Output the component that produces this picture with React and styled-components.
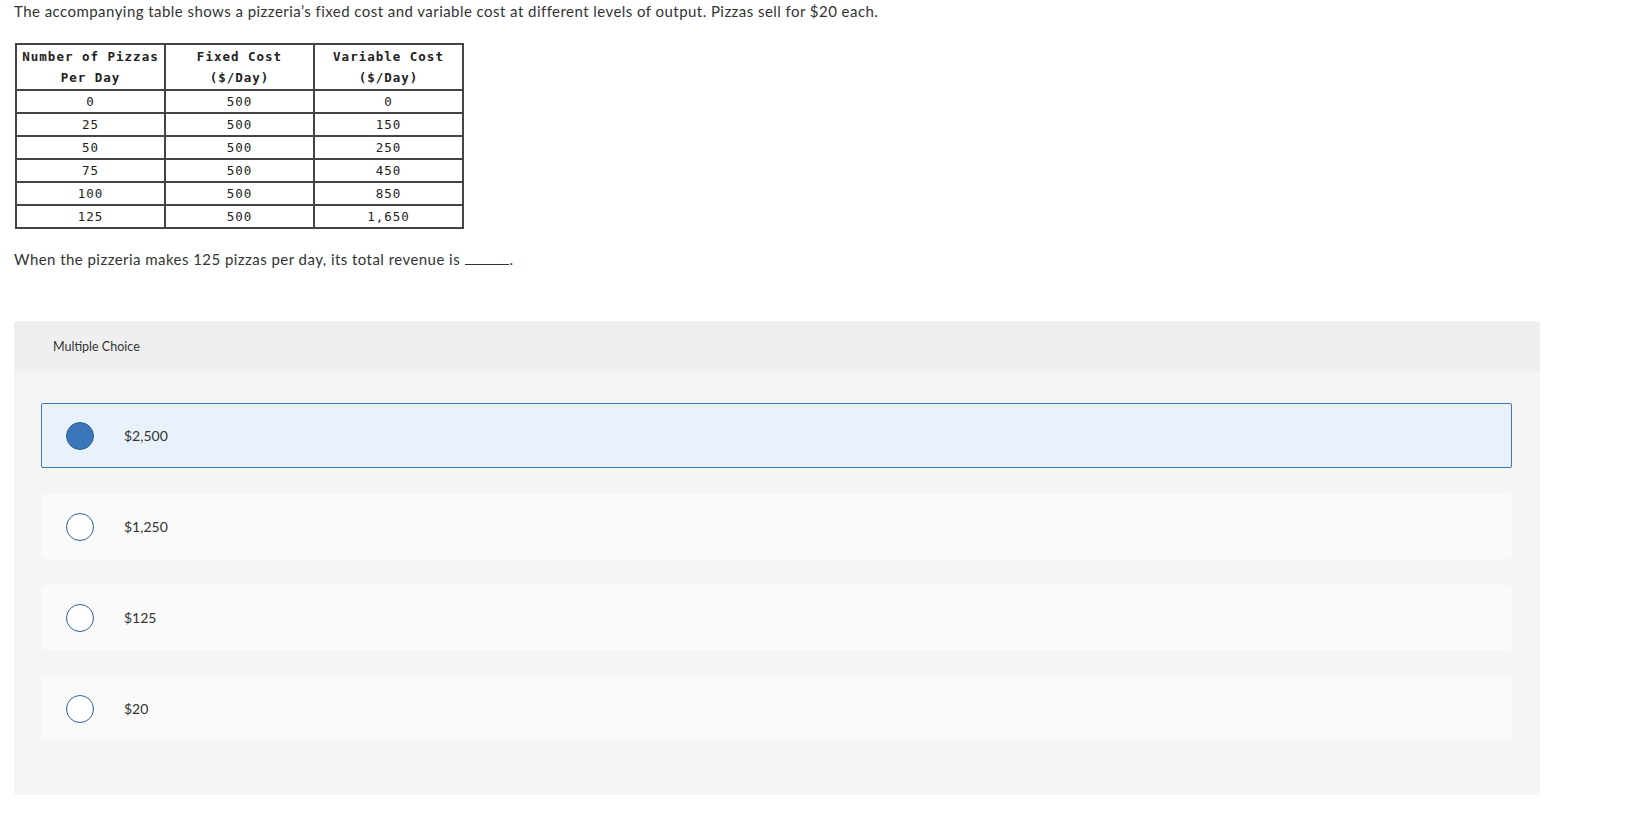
import styled, { createGlobalStyle } from "styled-components";

const GlobalStyle = createGlobalStyle`
    html, body {
        margin: 0;
        padding: 0;
        background: #ffffff;
    }
    body {
        font-family: Lato, "Open Sans", Arial, sans-serif;
        color: #333333;
    }
`;

const rows = [
    ["0", "500", "0"],
    ["25", "500", "150"],
    ["50", "500", "250"],
    ["75", "500", "450"],
    ["100", "500", "850"],
    ["125", "500", "1,650"],
];

const choices = ["$2,500", "$1,250", "$125", "$20"];

const App = () => {
    return (
        <Page>
            <GlobalStyle />
            <Intro>
                The accompanying table shows a pizzeria’s fixed cost and variable cost at different levels of output. Pizzas sell for $20 each.
            </Intro>
            <CostTable>
                <thead>
                    <tr>
                        <HeadCell>Number of Pizzas<br />Per Day</HeadCell>
                        <HeadCell>Fixed Cost<br />($/Day)</HeadCell>
                        <HeadCell>Variable Cost<br />($/Day)</HeadCell>
                    </tr>
                </thead>
                <tbody>
                    {rows.map((r) => (
                        <tr key={r[0]}>
                            <Cell>{r[0]}</Cell>
                            <Cell>{r[1]}</Cell>
                            <Cell>{r[2]}</Cell>
                        </tr>
                    ))}
                </tbody>
            </CostTable>
            <Question>
                When the pizzeria makes 125 pizzas per day, its total revenue is <Blank />.
            </Question>
            <Panel>
                <PanelHeader>Multiple Choice</PanelHeader>
                <Choices>
                    {choices.map((c, i) => (
                        <Choice key={c} $selected={i === 0}>
                            <Radio $selected={i === 0} />
                            <ChoiceText>{c}</ChoiceText>
                        </Choice>
                    ))}
                </Choices>
            </Panel>
        </Page>
    );
};

const Page = styled.div`
    padding: 0 14px 20px 14px;
    width: 1526px;
`;

const Intro = styled.div`
    font-size: 15px;
    line-height: 22px;
    letter-spacing: 0.45px;
`;

const CostTable = styled.table`
    margin-top: 21px;
    margin-left: 1px;
    border-collapse: collapse;
    border: 2px solid #333333;
    font-family: "DejaVu Sans Mono", "Liberation Mono", monospace;
    font-size: 12.5px;
    letter-spacing: 1px;
    color: #222222;
`;

const HeadCell = styled.th`
    width: 147px;
    border: 2px solid #444444;
    padding: 1px 0 1px 0;
    line-height: 21px;
    font-weight: bold;
    text-align: center;
`;

const Cell = styled.td`
    border: 2px solid #444444;
    height: 21px;
    padding: 0;
    line-height: 21px;
    text-align: center;
`;

const Question = styled.div`
    margin-top: 19px;
    font-size: 15px;
    line-height: 22px;
    letter-spacing: 0.45px;
`;

const Blank = styled.span`
    display: inline-block;
    width: 44px;
    height: 14px;
    border-bottom: 1px solid #333333;
    margin-left: 1px;
`;

const Panel = styled.div`
    margin-top: 51px;
    background: #f5f5f5;
    border-radius: 4px;
    padding-bottom: 54px;
`;

const PanelHeader = styled.div`
    height: 50px;
    display: flex;
    align-items: center;
    padding-left: 39px;
    background: #efefef;
    border-radius: 4px 4px 0 0;
    font-size: 12.5px;
    color: #333333;
`;

const Choices = styled.div`
    display: flex;
    flex-direction: column;
    gap: 26px;
    padding: 32px 28px 0 27px;
`;

const Choice = styled.div`
    box-sizing: border-box;
    height: 65px;
    display: flex;
    align-items: center;
    padding-left: ${(p) => (p.$selected ? "24px" : "25px")};
    background: ${(p) => (p.$selected ? "#e9f1fb" : "#fafafa")};
    border: ${(p) => (p.$selected ? "1px solid #3c78c0" : "none")};
    border-radius: ${(p) => (p.$selected ? "2px" : "4px")};
`;

const Radio = styled.span`
    box-sizing: border-box;
    width: 28px;
    height: 28px;
    border-radius: 50%;
    border: 1.5px solid #2e5f97;
    background: ${(p) => (p.$selected ? "#3b76bb" : "#ffffff")};
    flex-shrink: 0;
`;

const ChoiceText = styled.span`
    margin-left: 30px;
    font-size: 14px;
    color: #333333;
`;

export default App;
